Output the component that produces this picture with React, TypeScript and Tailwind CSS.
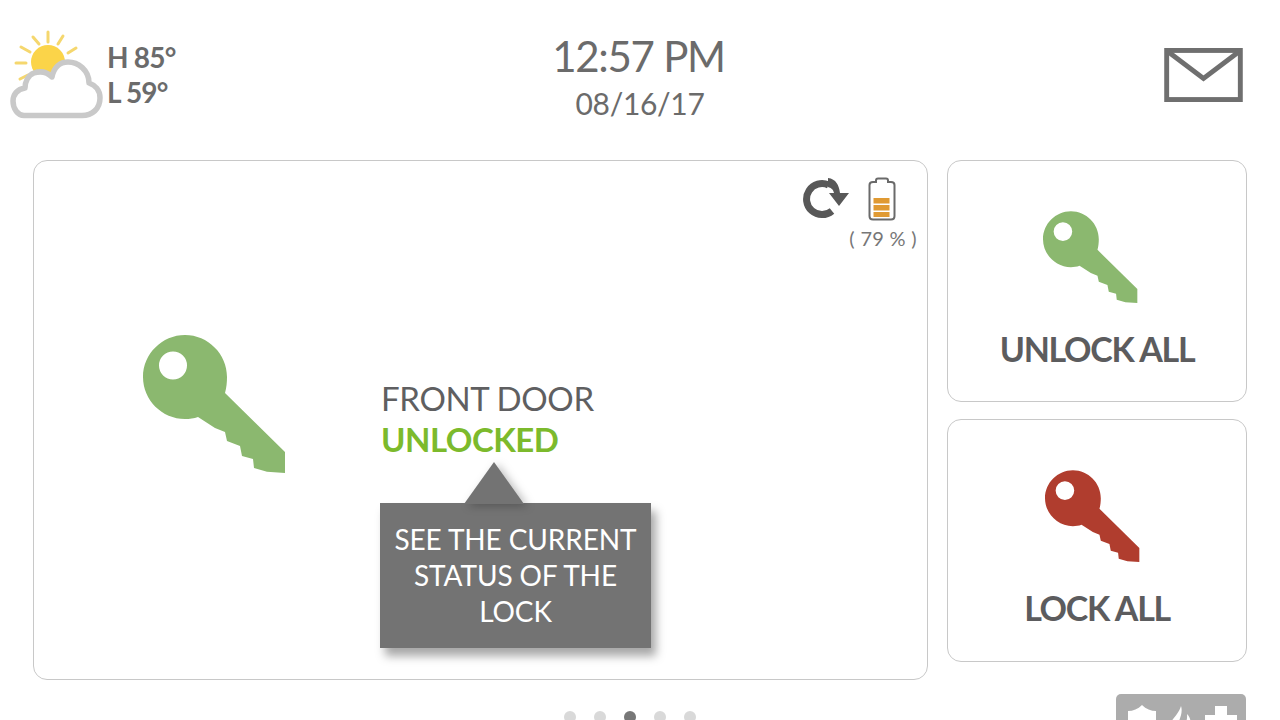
function Key({ color, className }: { color: string; className: string }) {
  return (
    <svg viewBox="0 0 143 139" className={className}>
      <path
        fill={color}
        fillRule="evenodd"
        d="M42 0C65 0 84 19 84 42C84 47 83.500 53 82 58L142 117V138L124 136.700L111 133L110 124L99 121L97 111L84 106L82 97L72 93L55 82C51 83.500 46.500 84 42 84C19 84 0 65 0 42C0 19 19 0 42 0ZM30 16.500A14 14 0 1 0 30 44.500A14 14 0 1 0 30 16.500Z"
      />
    </svg>
  );
}

function Weather() {
  return (
    <svg viewBox="0 0 110 100" className="w-[110px] h-[100px] shrink-0">
      <g stroke="#f5d76e" strokeWidth="3" strokeLinecap="round">
        <path d="M48 12V22M33 17L39 24M63 16L58 24M21 27L30 32M76 28L68 33M16 43H26M20 59L28 55" />
      </g>
      <circle cx="48" cy="42" r="17" fill="#fbd449" />
      <path
        d="M24 95.500H82C92 95.500 100 89 100 78C100 70 95 65 89 63C89 50 78 42 68 42C60 42 54 47 52 57C47 52 40 51 34 53C28 55 25 62 25 68C17 69 13 75 13 81C13 89 18 95.500 24 95.500Z"
        fill="#ffffff"
        stroke="#c9c9c9"
        strokeWidth="5.500"
        strokeLinejoin="round"
      />
    </svg>
  );
}

function Mail() {
  return (
    <svg viewBox="0 0 80 55" className="w-[79px] h-[54px]">
      <g fill="none" stroke="#6f6f6f">
        <rect x="2.500" y="2.500" width="75" height="50" strokeWidth="5" />
        <path d="M3 3L40 31L77 3" strokeWidth="5" />
      </g>
    </svg>
  );
}

function Refresh() {
  return (
    <svg viewBox="0 0 48 42" className="w-[48px] h-[42px]">
      <path d="M25.500 8A15.500 15.500 0 1 0 29 34" fill="none" stroke="#585858" strokeWidth="7" />
      <path d="M25 1C33 2 36 8 37 16H46L36 29L26 16H31C30 12 28 11 25 10Z" fill="#585858" />
    </svg>
  );
}

function Battery() {
  return (
    <svg viewBox="0 0 28 44" className="w-[28px] h-[44px]">
      <path
        d="M8 5V3.500C8 2 9 1.500 10 1.500H18C19 1.500 20 2 20 3.500V5H23C25 5 26.500 6 26.500 8V39C26.500 41.500 25 42.500 23 42.500H5C3 42.500 1.500 41.500 1.500 39V8C1.500 6 3 5 5 5Z"
        fill="none"
        stroke="#6a6a6a"
        strokeWidth="2"
      />
      <rect x="5.500" y="21" width="16" height="5.500" fill="#e09a33" />
      <rect x="5.500" y="28" width="16" height="5.500" fill="#e09a33" />
      <rect x="5.500" y="35" width="16" height="5" fill="#e09a33" />
    </svg>
  );
}

function Shield() {
  return (
    <svg viewBox="0 0 130 60" className="w-[130px] h-[60px]">
      <path d="M26 11C30 15 35 17 40 17V40L26 55L12 40V17C17 17 22 15 26 11Z" fill="#ffffff" />
      <path d="M52 34C54 26 62 22 65 12C67 18 64 24 62 30C60 34 58 36 58 40H52Z" fill="#ffffff" />
      <path d="M66 40C66 32 72 30 71 20C75 24 74 28 76 30C78 32 79 36 79 40Z" fill="#ffffff" />
      <path d="M89 21H99V12H111V21H121V36H89Z" fill="#ffffff" />
    </svg>
  );
}

export default function App() {
  return (
    <div className="w-[1280px] h-[720px] overflow-hidden bg-white flex flex-col font-['Lato','Open_Sans',sans-serif] text-[#6b6b6b]">
      <header className="h-[160px] flex shrink-0">
        <div className="w-[400px] flex items-start pt-[20px]">
          <Weather />
          <div className="text-[28px] leading-[35px] font-bold mt-[20px] -ml-[3px] tracking-[-0.8px]">
            <div>H 85°</div>
            <div>L 59°</div>
          </div>
        </div>
        <div className="flex-1 flex flex-col items-center pt-[29px]">
          <div className="text-[42px] leading-[54px] tracking-[-1.3px] mr-[3px]">12:57 PM</div>
          <div className="text-[30px] leading-[38px] mt-[1px] tracking-[-0.3px]">08/16/17</div>
        </div>
        <div className="w-[400px] flex justify-end pt-[48px] pr-[37px]">
          <Mail />
        </div>
      </header>

      <main className="h-[520px] shrink-0 flex pl-[33px] gap-[19px]">
        <section className="relative w-[895px] h-[520px] border border-[#c8c8c8] rounded-[14px] flex items-start">
          <Key color="#8bb86f" className="w-[143px] h-[139px] ml-[109px] mt-[174px] shrink-0" />
          <div className="ml-[95px] mt-[217px] text-[33px] leading-[41px]">
            <div className="text-[#5f5f61] tracking-[-0.35px]">FRONT DOOR</div>
            <div className="text-[#7cba2c] font-bold tracking-[-0.5px]">UNLOCKED</div>
          </div>
          <div className="absolute top-[16px] right-[10px] flex flex-col items-end">
            <div className="flex items-start gap-[17px] pr-[21px]">
              <Refresh />
              <Battery />
            </div>
            <div className="text-[20px] leading-[25px] text-[#777777] tracking-[0.3px] mt-[5px]">( 79 % )</div>
          </div>
          <div className="absolute left-[346px] top-[301px] flex flex-col">
            <svg viewBox="0 0 60 42" className="w-[60px] h-[42px] ml-[84px] mb-[-1px] drop-shadow-[4px_2px_4px_rgba(0,0,0,0.25)]">
              <path d="M30 0L60 42H0Z" fill="#737373" />
            </svg>
            <div className="w-[271px] h-[145px] bg-[#737373] shadow-[5px_8px_9px_rgba(0,0,0,0.35)] text-white text-[28px] leading-[36px] text-center pt-[18px] px-[10px] tracking-[-0.1px]">
              SEE THE CURRENT STATUS OF THE LOCK
            </div>
          </div>
        </section>

        <aside className="w-[300px] flex flex-col gap-[17px]">
          <button className="h-[242px] border border-[#c8c8c8] rounded-[14px] flex flex-col items-center pt-[50px]">
            <Key color="#8bb86f" className="w-[95px] h-[93px] shrink-0 mr-[13px]" />
            <span className="mt-[23px] text-[34px] leading-[44px] font-bold text-[#5c5c5e] tracking-[-1.3px]">UNLOCK ALL</span>
          </button>
          <button className="h-[243px] border border-[#c8c8c8] rounded-[14px] flex flex-col items-center pt-[50px]">
            <Key color="#b03d2e" className="w-[95px] h-[93px] shrink-0 mr-[9px]" />
            <span className="mt-[23px] text-[34px] leading-[44px] font-bold text-[#5c5c5e] tracking-[-1.3px]">LOCK ALL</span>
          </button>
        </aside>
      </main>

      <footer className="flex-1 flex items-start pl-[564px] pr-[34px]">
        <div className="flex gap-[18px] mt-[31px]">
          <span className="w-[12px] h-[12px] rounded-full bg-[#d9d9d9]" />
          <span className="w-[12px] h-[12px] rounded-full bg-[#d9d9d9]" />
          <span className="w-[12px] h-[12px] rounded-full bg-[#777777]" />
          <span className="w-[12px] h-[12px] rounded-full bg-[#d9d9d9]" />
          <span className="w-[12px] h-[12px] rounded-full bg-[#d9d9d9]" />
        </div>
        <div className="ml-auto mt-[14px] w-[130px] h-[60px] bg-[#acacac] rounded-[5px] shrink-0">
          <Shield />
        </div>
      </footer>
    </div>
  );
}
